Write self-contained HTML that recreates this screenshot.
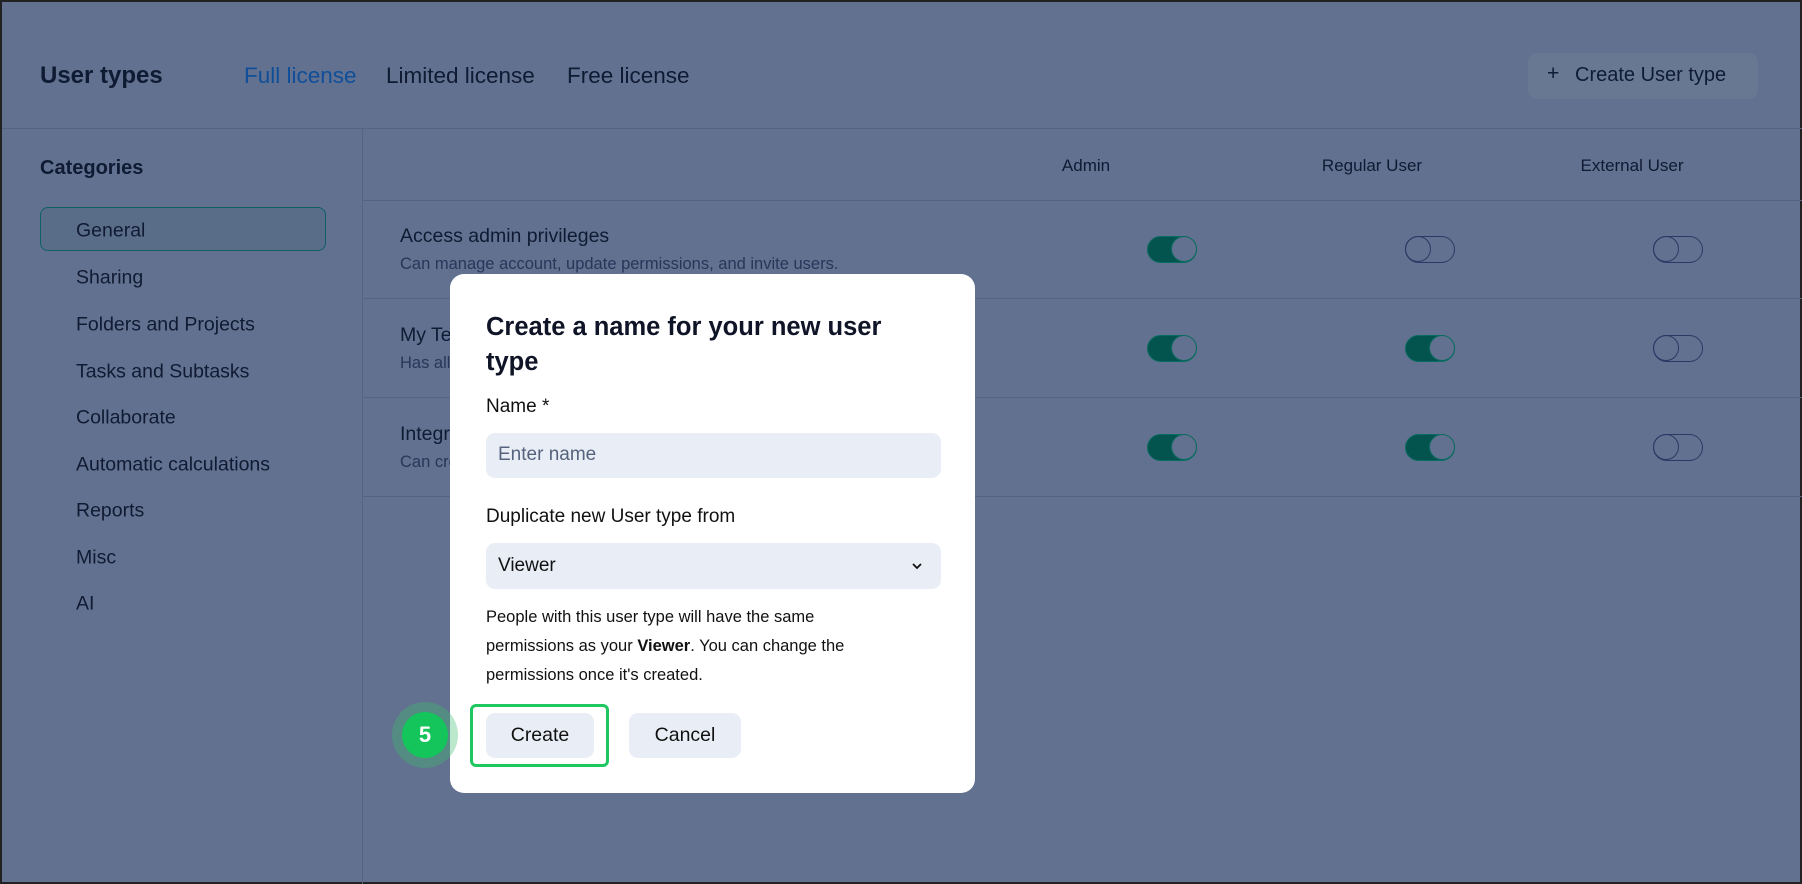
<!DOCTYPE html>
<html><head><meta charset="utf-8"><style>
*{box-sizing:border-box;margin:0;padding:0}
html,body{width:1802px;height:884px;overflow:hidden}
body{background:#62718f;font-family:"Liberation Sans",sans-serif;color:#0f1a33;position:relative;border:2px solid #222;}
.a{position:absolute;white-space:nowrap}
.hl{position:absolute;background:#56657f;height:1px}
.tog{position:absolute;width:50px;height:27px;border-radius:14px}
.on{background:#03544f;border:1.5px solid #0a6b60}
.on::after{content:"";position:absolute;right:-1px;top:-1px;width:26px;height:26px;border-radius:50%;background:#62718f;border:1.5px solid #0a6b60;box-sizing:border-box}
.off{border:1.5px solid #2a3a66}
.off::after{content:"";position:absolute;left:-1px;top:-1px;width:26px;height:26px;border-radius:50%;border:1.5px solid #2a3a66;box-sizing:border-box}
.cat{position:absolute;left:74px;font-size:19.5px;color:#101a33;transform:translateY(-50%)}
</style></head><body>
<div class="a" style="left:38px;top:60px;font-size:24px;font-weight:bold;color:#0f1a33">User types</div>
<div class="a" style="left:242px;top:61px;font-size:22.5px;color:#0f4f9a">Full license</div>
<div class="a" style="left:384px;top:61px;font-size:22.5px">Limited license</div>
<div class="a" style="left:565px;top:61px;font-size:22.5px">Free license</div>
<div class="a" style="left:1526px;top:51px;width:230px;height:46px;border-radius:9px;background:#687893"></div>
<div class="a" style="left:1545px;top:60px;font-size:21px;font-weight:300">+</div>
<div class="a" style="left:1573px;top:62px;font-size:20px">Create User type</div>
<div class="hl" style="left:0;top:126px;width:1802px"></div>
<div class="a" style="left:360px;top:127px;width:1px;height:760px;background:#56657f"></div>
<div class="a" style="left:38px;top:155px;font-size:20px;font-weight:bold">Categories</div>
<div class="a" style="left:38px;top:205px;width:286px;height:44px;border:1.5px solid #0f5f63;border-radius:8px;background:#5a6d88"></div>
<div class="cat" style="top:229px">General</div>
<div class="cat" style="top:276px">Sharing</div>
<div class="cat" style="top:323px">Folders and Projects</div>
<div class="cat" style="top:370px">Tasks and Subtasks</div>
<div class="cat" style="top:416px">Collaborate</div>
<div class="cat" style="top:463px">Automatic calculations</div>
<div class="cat" style="top:509px">Reports</div>
<div class="cat" style="top:556px">Misc</div>
<div class="cat" style="top:602px">AI</div>
<div class="a" style="left:1084px;top:154px;font-size:17px;transform:translateX(-50%)">Admin</div>
<div class="a" style="left:1370px;top:154px;font-size:17px;transform:translateX(-50%)">Regular User</div>
<div class="a" style="left:1630px;top:154px;font-size:17px;transform:translateX(-50%)">External User</div>
<div class="hl" style="left:361px;top:198px;width:1441px"></div>
<div class="hl" style="left:361px;top:296px;width:1441px"></div>
<div class="hl" style="left:361px;top:395px;width:1441px"></div>
<div class="hl" style="left:361px;top:494px;width:1441px"></div>
<div class="a" style="left:398px;top:223px;font-size:19.5px">Access admin privileges</div>
<div class="a" style="left:398px;top:253px;font-size:16.5px;color:#27365a">Can manage account, update permissions, and invite users.</div>
<div class="a" style="left:398px;top:322px;font-size:19.5px">My Team</div>
<div class="a" style="left:398px;top:352px;font-size:16.5px;color:#27365a">Has all</div>
<div class="a" style="left:398px;top:421px;font-size:19.5px">Integrations</div>
<div class="a" style="left:398px;top:451px;font-size:16.5px;color:#27365a">Can create and manage integrations with other tools and apps.</div>
<div class="tog on" style="left:1145px;top:234px"></div>
<div class="tog off" style="left:1403px;top:234px"></div>
<div class="tog off" style="left:1651px;top:234px"></div>
<div class="tog on" style="left:1145px;top:333px"></div>
<div class="tog on" style="left:1403px;top:333px"></div>
<div class="tog off" style="left:1651px;top:333px"></div>
<div class="tog on" style="left:1145px;top:432px"></div>
<div class="tog on" style="left:1403px;top:432px"></div>
<div class="tog off" style="left:1651px;top:432px"></div>

<div class="a" style="left:448px;top:272px;width:525px;height:519px;background:#fff;border-radius:14px"></div>
<div class="a" style="left:484px;top:308px;font-size:25.5px;font-weight:bold;line-height:35px;white-space:normal;width:440px;color:#0f1426">Create a name for your new user type</div>
<div class="a" style="left:484px;top:394px;font-size:19px;color:#111">Name *</div>
<div class="a" style="left:484px;top:431px;width:455px;height:45px;border-radius:9px;background:#e9eef6"></div>
<div class="a" style="left:496px;top:442px;font-size:19px;color:#56637d">Enter name</div>
<div class="a" style="left:484px;top:504px;font-size:19px;color:#111">Duplicate new User type from</div>
<div class="a" style="left:484px;top:541px;width:455px;height:46px;border-radius:9px;background:#e9eef6"></div>
<div class="a" style="left:496px;top:553px;font-size:19px;color:#111">Viewer</div>
<svg class="a" style="left:908px;top:558px" width="14" height="12" viewBox="0 0 14 12"><path d="M3 4l4 4 4-4" fill="none" stroke="#111" stroke-width="1.8"/></svg>
<div class="a" style="left:484px;top:601px;font-size:16.5px;line-height:29px;color:#111;white-space:normal;width:395px">People with this user type will have the same permissions as your <b>Viewer</b>. You can change the permissions once it's created.</div>
<div class="a" style="left:484px;top:711px;width:108px;height:45px;border-radius:9px;background:#e9eef6;text-align:center;line-height:45px;font-size:19.5px;color:#111">Create</div>
<div class="a" style="left:627px;top:711px;width:112px;height:45px;border-radius:9px;background:#e9eef6;text-align:center;line-height:45px;font-size:19.5px;color:#111">Cancel</div>
<div class="a" style="left:468px;top:702px;width:139px;height:63px;border:3px solid #1ec760;border-radius:6px"></div>
<div class="a" style="left:390px;top:700px;width:66px;height:66px;border-radius:50%;background:rgba(60,190,110,.35)"></div>
<div class="a" style="left:400px;top:710px;width:46px;height:46px;border-radius:50%;background:#13c55a;color:#fff;font-weight:bold;font-size:22px;text-align:center;line-height:46px">5</div>
</body></html>
